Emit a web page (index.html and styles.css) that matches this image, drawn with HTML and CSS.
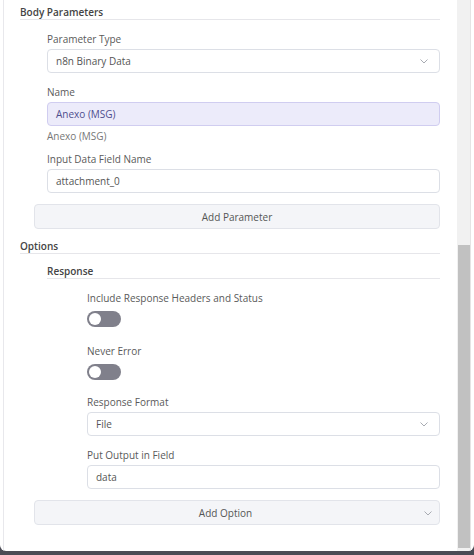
FILE: index.html
```html
<!DOCTYPE html>
<html lang="en">
<head>
    <meta charset="UTF-8">
    <title>Node Parameters</title>
    <link rel="stylesheet" href="styles.css">
</head>
<body>
    <div class="panel">
        <div class="content">
            <div class="section-title">Body Parameters</div>
            <div class="collection">
                <div class="fields">
                    <div class="field">
                        <label class="field-label">Parameter Type</label>
                        <div class="select">
                            <span>n8n Binary Data</span>
                            <svg class="chevron" viewBox="0 0 10 6"><path d="M1.5 1.5l3.5 3.5 3.5-3.5"/></svg>
                        </div>
                    </div>
                    <div class="field">
                        <label class="field-label">Name</label>
                        <div class="input input-active">Anexo (MSG)</div>
                        <div class="field-hint">Anexo (MSG)</div>
                    </div>
                    <div class="field field-after-hint">
                        <label class="field-label">Input Data Field Name</label>
                        <div class="input">attachment_0</div>
                    </div>
                </div>
                <button class="add-button">Add Parameter</button>
            </div>

            <div class="section-title">Options</div>
            <div class="collection">
                <div class="fields">
                    <div class="sub-title">Response</div>
                    <div class="options">
                        <div class="field">
                            <label class="field-label">Include Response Headers and Status</label>
                            <div class="toggle"><span class="knob"></span></div>
                        </div>
                        <div class="field field-after-toggle">
                            <label class="field-label">Never Error</label>
                            <div class="toggle"><span class="knob"></span></div>
                        </div>
                        <div class="field field-after-toggle field-format">
                            <label class="field-label">Response Format</label>
                            <div class="select">
                                <span>File</span>
                                <svg class="chevron" viewBox="0 0 10 6"><path d="M1.5 1.5l3.5 3.5 3.5-3.5"/></svg>
                            </div>
                        </div>
                        <div class="field">
                            <label class="field-label">Put Output in Field</label>
                            <div class="input">data</div>
                        </div>
                    </div>
                </div>
                <button class="add-button">
                    <span class="button-text">Add Option</span>
                    <svg class="chevron button-chevron" viewBox="0 0 10 6"><path d="M1.5 1.5l3.5 3.5 3.5-3.5"/></svg>
                </button>
            </div>
        </div>
        <div class="scrollbar">
            <div class="scroll-thumb"></div>
        </div>
    </div>
</body>
</html>
```

FILE: styles.css
```css
* {
    margin: 0;
    padding: 0;
    box-sizing: border-box;
}

body {
    font-family: 'Open Sans', 'Liberation Sans', sans-serif;
    font-size: 10px;
    color: #555;
    background-color: #4b4b55;
    height: 555px;
    overflow: hidden;
}

.panel {
    height: 551px;
    background-color: #fff;
    border-radius: 0 0 6px 6px;
    display: flex;
    padding-left: 3px;
    padding-right: 3px;
    overflow: hidden;
}

.content {
    flex: 1;
    border-left: 1px solid #e8e8ec;
    padding: 5px 17px 0 16px;
}

.section-title {
    font-weight: 600;
    color: #444;
    line-height: 14px;
    border-bottom: 1px solid #e6e6ea;
}

.collection {
    padding-left: 14px;
    margin-bottom: 10px;
}

.fields {
    padding-left: 13px;
}

.field {
    padding-top: 10px;
}

.field-label {
    display: block;
    line-height: 19px;
    color: #5a5a5a;
}

.select,
.input {
    height: 24px;
    border: 1px solid #dcdfe6;
    border-radius: 4px;
    padding: 0 8px;
    display: flex;
    align-items: center;
    justify-content: space-between;
    color: #555;
    background: #fff;
}

.input-active {
    background-color: #ecebfa;
    border-color: #d0cdf0;
    color: #4f4e8e;
}

.field-hint {
    line-height: 18px;
    margin-top: 1px;
    color: #777;
}

.field-after-hint {
    padding-top: 5px;
}

.chevron {
    width: 10px;
    height: 6px;
    fill: none;
    stroke: #a8abb2;
    stroke-width: 1;
    margin-right: 2px;
}

.add-button {
    display: flex;
    align-items: center;
    justify-content: center;
    width: 100%;
    height: 25px;
    margin-top: 11px;
    background-color: #f4f5f8;
    border: 1px solid #e2e4ea;
    border-radius: 4px;
    font-family: inherit;
    font-size: 10px;
    color: #555;
}

.button-text {
    flex: 1;
    text-align: center;
}

.button-chevron {
    margin: 0 6px 0 7px;
    flex-shrink: 0;
}

.sub-title {
    margin-top: 10px;
    font-weight: 600;
    color: #444;
    line-height: 14px;
    border-bottom: 1px solid #e6e6ea;
}

.options {
    padding-left: 40px;
}

.toggle {
    width: 34px;
    height: 16px;
    margin-top: 3px;
    border-radius: 8px;
    background-color: #80808b;
    padding: 2px;
}

.knob {
    display: block;
    width: 12px;
    height: 12px;
    border-radius: 50%;
    background-color: #fff;
}

.field-after-toggle {
    padding-top: 15px;
}

.field-format {
    padding-top: 13px;
}

.scrollbar {
    width: 14px;
    background-color: #f1f1f1;
    border-right: 1px solid #e4e4e4;
    padding-top: 245px;
    padding-left: 1px;
}

.scroll-thumb {
    height: 303px;
    background-color: #c1c1c1;
}
```
